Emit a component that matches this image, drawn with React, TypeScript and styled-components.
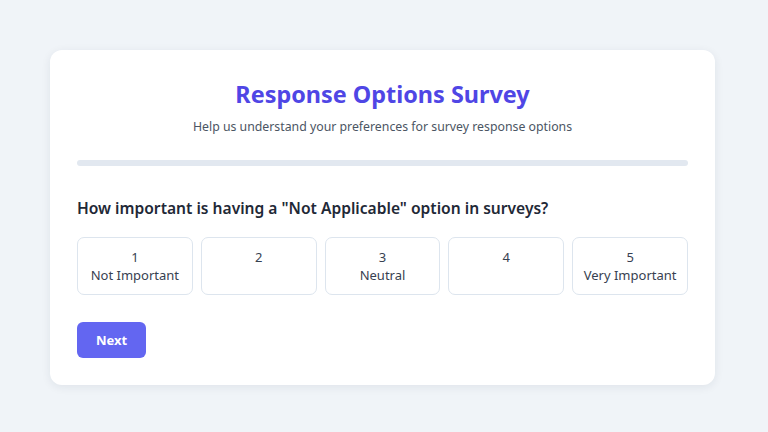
import React, { useState } from "react";
import styled, { createGlobalStyle } from "styled-components";

const Global = createGlobalStyle`
  html, body { margin: 0; padding: 0; }
  body {
    background: #f0f4f8;
    font-family: "Noto Sans", "Open Sans", "Liberation Sans", sans-serif;
    width: 768px;
    height: 432px;
    overflow: hidden;
  }
  * { box-sizing: border-box; }
`;

const Page = styled.div`
  padding: 50px 53px 0 50px;
`;

const Card = styled.div`
  background: #ffffff;
  border-radius: 12px;
  box-shadow: 0 2px 10px rgba(30, 41, 59, 0.08);
  padding: 27px 27px 27px 27px;
  height: 335px;
  display: flex;
  flex-direction: column;
`;

const Header = styled.header`
  text-align: center;
  display: flex;
  flex-direction: column;
  align-items: center;
`;

const Title = styled.h1`
  margin: 0;
  color: #4f46e5;
  font-size: 23.4px;
  font-weight: 700;
  line-height: 34px;
`;

const Subtitle = styled.p`
  margin: 6px 0 0;
  color: #4b5563;
  font-size: 12.3px;
  line-height: 20px;
`;

const Progress = styled.div`
  margin-top: 23px;
  height: 6px;
  border-radius: 3px;
  background: #e2e8f0;
  overflow: hidden;
`;

const ProgressFill = styled.div`
  height: 100%;
  background: #6366f1;
`;

const Question = styled.h2`
  margin: 30px 0 0;
  font-size: 15.6px;
  font-weight: 600;
  color: #1f2937;
  line-height: 24px;
`;

const Options = styled.div`
  margin-top: 17px;
  display: grid;
  grid-template-columns: repeat(5, 1fr);
  gap: 8px;
`;

const Option = styled.button<{ $active: boolean }>`
  height: 58px;
  border: 1.5px solid ${(p) => (p.$active ? "#6366f1" : "#dde5ee")};
  background: ${(p) => (p.$active ? "#eef2ff" : "#ffffff")};
  border-radius: 7px;
  padding: 10px 4px 0;
  display: flex;
  flex-direction: column;
  align-items: center;
  justify-content: flex-start;
  font-family: inherit;
  font-size: 13px;
  line-height: 18px;
  color: #374151;
  cursor: pointer;
`;

const Next = styled.button`
  margin-top: 27px;
  align-self: flex-start;
  width: 69px;
  height: 37px;
  border: none;
  border-radius: 6px;
  background: #6366f1;
  color: #ffffff;
  font-family: inherit;
  font-size: 13px;
  font-weight: 700;
  cursor: pointer;
`;

const options = [
  { n: 1, label: "Not Important" },
  { n: 2, label: "" },
  { n: 3, label: "Neutral" },
  { n: 4, label: "" },
  { n: 5, label: "Very Important" },
];

export default function App() {
  const [sel, setSel] = useState<number | null>(null);
  return (
    <Page>
      <Global />
      <Card>
        <Header>
          <Title>Response Options Survey</Title>
          <Subtitle>Help us understand your preferences for survey response options</Subtitle>
        </Header>
        <Progress>
          <ProgressFill style={{ width: "0%" }} />
        </Progress>
        <Question>How important is having a "Not Applicable" option in surveys?</Question>
        <Options>
          {options.map((o) => (
            <Option key={o.n} $active={sel === o.n} onClick={() => setSel(o.n)}>
              <span>{o.n}</span>
              {o.label && <span>{o.label}</span>}
            </Option>
          ))}
        </Options>
        <Next>Next</Next>
      </Card>
    </Page>
  );
}
